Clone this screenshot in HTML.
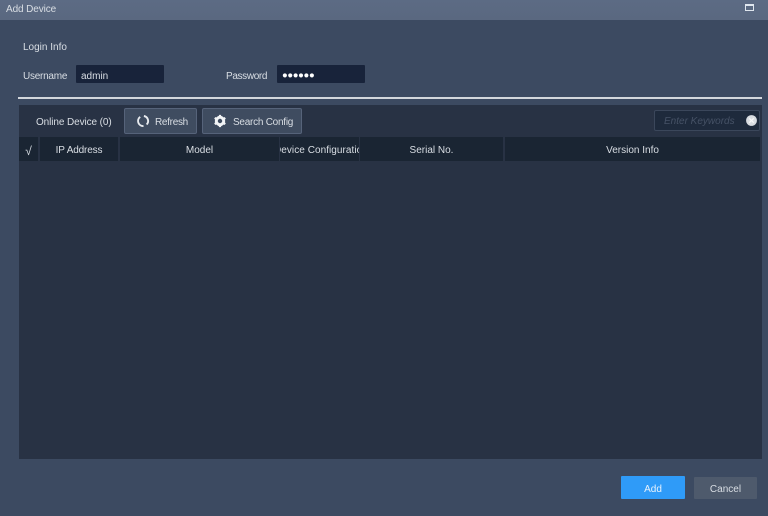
<!DOCTYPE html>
<html>
<head>
<meta charset="utf-8">
<style>
html,body{margin:0;padding:0}
body{width:768px;height:516px;overflow:hidden;position:relative;background:#3c4a61;font-family:"Liberation Sans",sans-serif;font-size:10px;color:#d9dee4}
div{position:absolute;box-sizing:border-box;white-space:nowrap}
.t{line-height:14px}
.in{background:#18233a;border-radius:1px}
.th{top:137px;height:24px;background:#1a2533;line-height:24px;text-align:center;overflow:hidden;padding-top:2px}
.btn{background:#3f4c60;border:1px solid #56637a;border-radius:2px;height:26px;top:108px}
</style>
</head>
<body>
<div style="left:0;top:0;width:768px;height:20px;background:linear-gradient(#5c6b84,#5a6880)"></div>
<div class="t" style="left:6px;top:3px;letter-spacing:-.1px">Add Device</div>
<svg style="position:absolute;left:745px;top:4px" width="10" height="8" viewBox="0 0 10 8"><rect x=".5" y=".5" width="8" height="6" fill="none" stroke="#dfe6ee"/><rect x="0" y="0" width="9" height="2" fill="#dfe6ee"/></svg>

<div class="t" style="left:23px;top:41px">Login Info</div>
<div class="t" style="left:23px;top:70px;letter-spacing:-.25px">Username</div>
<div class="in" style="left:76px;top:65px;width:88px;height:18px"></div>
<div class="t" style="left:81px;top:70px">admin</div>
<div class="t" style="left:226px;top:70px;letter-spacing:-.35px">Password</div>
<div class="in" style="left:277px;top:65px;width:88px;height:18px"></div>
<div class="t" style="left:282px;top:69px;font-size:9.5px;letter-spacing:-.35px;color:#fff">●●●●●●</div>

<div style="left:18px;top:97px;width:744px;height:2px;background:#d3d7dc"></div>

<div style="left:19px;top:105px;width:743px;height:354px;background:#283244"></div>
<div class="t" style="left:36px;top:116px;letter-spacing:-.1px">Online Device (0)</div>

<div class="btn" style="left:124px;width:73px"></div>
<svg style="position:absolute;left:136px;top:114px" width="14" height="14" viewBox="0 0 14 14"><path d="M7.9 2A5 5 0 0 1 10.6 10.5M7.5 12A5 5 0 0 1 4.2 2.9" fill="none" stroke="#e8ebef" stroke-width="1.9"/></svg>
<div class="t" style="left:155px;top:116px;letter-spacing:-.3px">Refresh</div>

<div class="btn" style="left:202px;width:100px"></div>
<svg style="position:absolute;left:213px;top:114px" width="14" height="14" viewBox="0 0 14 14"><circle cx="7" cy="7" r="3.7" fill="none" stroke="#f2f4f6" stroke-width="3"/><g stroke="#f2f4f6" stroke-width="2.2"><path d="M7 .9V3M7 11V13.1M1.7 3.9L3.5 5M10.5 9L12.3 10.1M1.7 10.1L3.5 9M10.5 5L12.3 3.9"/></g></svg>
<div class="t" style="left:233px;top:116px;letter-spacing:-.25px">Search Config</div>

<div style="left:654px;top:110px;width:106px;height:21px;background:#1e2a3c;border:1px solid #3b475b;border-radius:2px"></div>
<div class="t" style="left:664px;top:115px;font-style:italic;color:#465266">Enter Keywords</div>
<svg style="position:absolute;left:745px;top:114px" width="13" height="13" viewBox="0 0 13 13"><circle cx="6.5" cy="6.5" r="5.4" fill="#d9dde2"/><path d="M4.3 4.3L8.7 8.7M8.7 4.3L4.3 8.7" stroke="#f7f8f9" stroke-width="1.3"/></svg>

<div class="th" style="left:19px;width:19px;font-size:12px">√</div>
<div class="th" style="left:40px;width:78px;letter-spacing:-.15px">IP Address</div>
<div class="th" style="left:120px;width:159px">Model</div>
<div class="th" style="left:280px;width:79px"><span style="position:absolute;left:-6px;top:2px;letter-spacing:.05px">Device Configuration</span></div>
<div class="th" style="left:360px;width:143px">Serial No.</div>
<div class="th" style="left:505px;width:255px">Version Info</div>

<div style="left:621px;top:476px;width:64px;height:23px;background:#2f9bf8;border-radius:1px;line-height:28px;text-align:center;color:#e6f2fd">Add</div>
<div style="left:694px;top:477px;width:63px;height:22px;background:#4e5a6c;border-radius:1px;line-height:26px;text-align:center">Cancel</div>
</body>
</html>
